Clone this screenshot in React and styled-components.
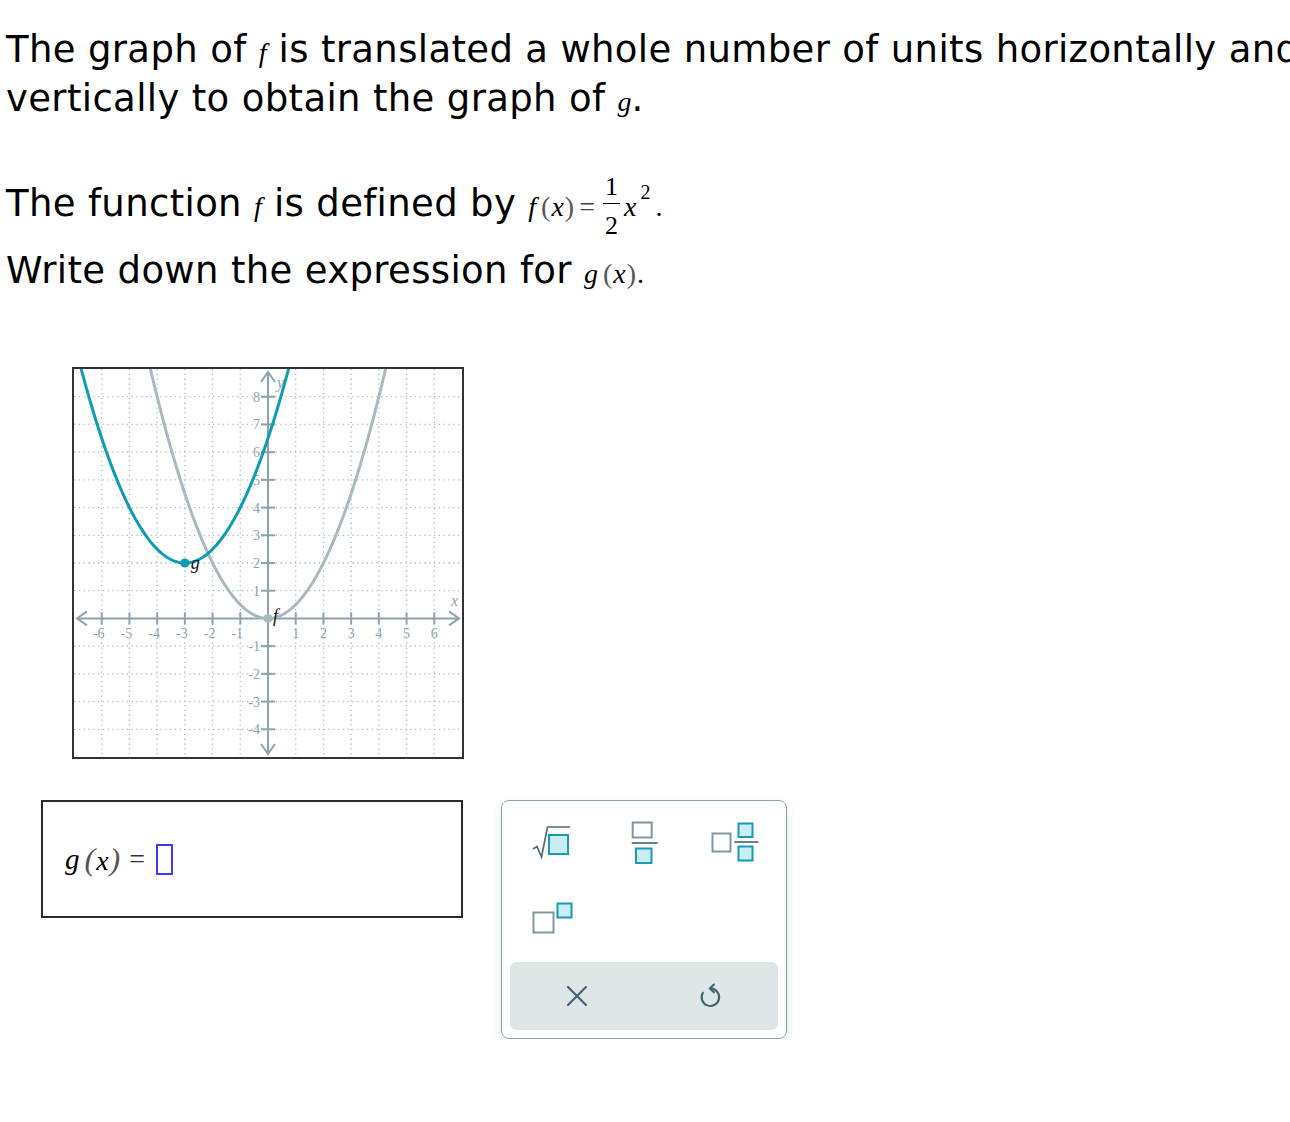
import React from "react";
import styled, { createGlobalStyle } from "styled-components";

const GlobalStyle = createGlobalStyle`
  html, body {
    margin: 0;
    background: #fff;
    overflow: hidden;
  }
  body {
    font-family: "DejaVu Sans", Verdana, sans-serif;
    color: #000;
  }
`;

const Page = styled.div`
  width: 100%;
  overflow: hidden;
  padding-left: 6px;
  box-sizing: border-box;
`;

const Para = styled.div`
  font-size: 37px;
  letter-spacing: 0.35px;
  line-height: 49px;
  white-space: nowrap;
  margin-top: ${(p) => p.$top || 0}px;
`;

const M = styled.span`
  font-family: "Liberation Serif", "Times New Roman", serif;
  font-size: ${(p) => p.$size || 28}px;
  line-height: 1;
  letter-spacing: 0;
  font-style: ${(p) => (p.$upright ? "normal" : "italic")};
  color: ${(p) => p.$color || "#000"};
  margin-left: ${(p) => p.$gap || 0}px;
`;

const Paren = styled.span`
  font-family: "Liberation Serif", "Times New Roman", serif;
  font-style: normal;
  color: #555;
  margin: 0 1px;
`;

const Frac = styled.span`
  display: inline-flex;
  flex-direction: column;
  align-items: center;
  vertical-align: 21px;
  font-family: "Liberation Serif", "Times New Roman", serif;
  font-size: 26px;
  line-height: 22px;
  letter-spacing: 0;
  margin: 0 4px 0 8px;
`;

const FracTop = styled.span`
  font-family: "Liberation Serif", "Times New Roman", serif;
  padding: 0 2px 5px;
  border-bottom: 1px solid #000;
`;

const FracBottom = styled.span`
  font-family: "Liberation Serif", "Times New Roman", serif;
  padding-top: 11px;
`;

const Sup = styled.sup`
  font-family: "Liberation Serif", "Times New Roman", serif;
  font-size: 20px;
  font-style: normal;
  vertical-align: 17px;
  line-height: 0;
  margin-left: 4px;
`;

const GraphFrame = styled.div`
  margin: 72px 0 0 66px;
  width: 388px;
  height: 388px;
  border: 2px solid #333;
  svg {
    display: block;
    overflow: hidden;
  }
`;

const BottomRow = styled.div`
  display: flex;
  align-items: flex-start;
  margin: 41px 0 0 35px;
  gap: 38px;
`;

const AnswerBox = styled.div`
  width: 396px;
  height: 114px;
  padding-left: 22px;
  border: 2px solid #2a2a2a;
  display: flex;
  align-items: center;
`;

const AnswerMath = styled.div`
  font-family: "Liberation Serif", "Times New Roman", serif;
  font-size: 28px;
  display: flex;
  align-items: center;
`;

const BigParen = styled.span`
  font-size: 32px;
  color: #555;
  margin: 0 1px;
`;

const Equals = styled.span`
  margin: 0 11px 0 8px;
  color: #333;
`;

const Slot = styled.span`
  display: inline-block;
  width: 13px;
  height: 27px;
  border: 2px solid #3b3bff;
`;

const Keypad = styled.div`
  width: 268px;
  border: 1.5px solid #8ea6ad;
  border-radius: 8px;
  padding: 0 8px 8px;
  box-shadow: 0 5px 10px rgba(60, 80, 90, 0.14);
  background: #fff;
`;

const KeyGrid = styled.div`
  display: grid;
  grid-template-columns: repeat(3, 1fr);
  grid-auto-rows: 78px;
`;

const Key = styled.div`
  display: flex;
  svg {
    display: block;
  }
`;

const ActionBar = styled.div`
  margin-top: 5px;
  height: 68px;
  background: #dfe6e8;
  border-radius: 6px;
  display: grid;
  grid-template-columns: 1fr 1fr;
`;

const ActionButton = styled.div`
  display: flex;
  align-items: center;
  justify-content: center;
  color: #3e6570;
`;

// graph geometry: x in [-7, 7], y in [-5, 9]
const SIZE = 388;
const U = SIZE / 14;
const px = (x) => (x + 7) * U;
const py = (y) => (9 - y) * U;

const GRID = "#a7bfc6";
const AXIS = "#8ba4ab";
const F_COL = "#a8babf";
const G_COL = "#0f9bb1";

const curvePath = (fn) => {
  let d = "";
  for (let i = 0; i <= 280; i++) {
    const x = -7 + i * 0.05;
    d += (i ? "L" : "M") + px(x).toFixed(2) + " " + py(fn(x)).toFixed(2);
  }
  return d;
};

const xs = [-6, -5, -4, -3, -2, -1, 1, 2, 3, 4, 5, 6];
const ys = [-4, -3, -2, -1, 1, 2, 3, 4, 5, 6, 7, 8];

const Graph = () => {
  const ox = px(0);
  const oy = py(0);
  return (
    <svg width={SIZE} height={SIZE} viewBox={`0 0 ${SIZE} ${SIZE}`}>
      {xs.map((x) => (
        <line key={"gx" + x} x1={px(x)} y1={0} x2={px(x)} y2={SIZE} stroke={GRID} strokeWidth="1.3" strokeDasharray="1.3 3.5" />
      ))}
      {ys.map((y) => (
        <line key={"gy" + y} x1={0} y1={py(y)} x2={SIZE} y2={py(y)} stroke={GRID} strokeWidth="1.3" strokeDasharray="1.3 3.5" />
      ))}
      <g stroke={AXIS} strokeWidth="2" fill="none">
        <line x1={3} y1={oy} x2={SIZE - 3} y2={oy} />
        <line x1={ox} y1={3} x2={ox} y2={SIZE - 3} />
        <polyline points={`${13},${oy - 7} ${3},${oy} ${13},${oy + 7}`} />
        <polyline points={`${SIZE - 13},${oy - 7} ${SIZE - 3},${oy} ${SIZE - 13},${oy + 7}`} />
        <polyline points={`${ox - 7},${13} ${ox},${3} ${ox + 7},${13}`} />
        <polyline points={`${ox - 7},${SIZE - 13} ${ox},${SIZE - 3} ${ox + 7},${SIZE - 13}`} />
        {xs.map((x) => (
          <line key={"tx" + x} x1={px(x)} y1={oy - 6} x2={px(x)} y2={oy + 6} />
        ))}
        {ys.map((y) => (
          <line key={"ty" + y} x1={ox - 7} y1={py(y)} x2={ox + 7} y2={py(y)} />
        ))}
      </g>
      <g fill={AXIS} fontFamily="'Liberation Serif', 'Times New Roman', serif" fontSize="14">
        {xs.map((x) => (
          <text key={"lx" + x} x={px(x) - (x < 0 ? 3 : 0)} y={oy + 20} textAnchor="middle">
            {x < 0 ? "-" + -x : x}
          </text>
        ))}
        {ys.map((y) => (
          <text key={"ly" + y} x={ox - 8} y={py(y) + 5} textAnchor="end">
            {y < 0 ? "-" + -y : y}
          </text>
        ))}
        <text x={px(6.6)} y={oy - 12} fontStyle="italic" fontSize="16">x</text>
        <text x={ox + 9} y={19} fontStyle="italic" fontSize="16">y</text>
      </g>
      <path d={curvePath((x) => 0.5 * x * x)} fill="none" stroke={F_COL} strokeWidth="3" />
      <path d={curvePath((x) => 0.5 * (x + 3) * (x + 3) + 2)} fill="none" stroke={G_COL} strokeWidth="3" />
      <circle cx={ox} cy={oy} r="4.5" fill={F_COL} />
      <circle cx={px(-3)} cy={py(2)} r="4.5" fill={G_COL} />
      <g fontFamily="'Liberation Serif', 'Times New Roman', serif" fontStyle="italic" fontSize="18" fill="#111">
        <text x={ox + 5} y={oy + 4}>f</text>
        <text x={px(-3) + 6} y={py(2) + 6}>g</text>
      </g>
    </svg>
  );
};

const TEAL = "#169cb4";
const TEAL_FILL = "#c9edf2";
const GREY = "#7e98a0";
const INK = "#4d6a73";

const SqrtKey = () => (
  <svg width="89" height="78" viewBox="0 0 89 78">
    <path d="M23 48 L27 45.5 L31.5 56 L37.5 26 L60 26" fill="none" stroke={INK} strokeWidth="1.7" />
    <rect x="39" y="34" width="19" height="19" fill={TEAL_FILL} stroke={TEAL} strokeWidth="2" />
  </svg>
);

const FracKey = () => (
  <svg width="89" height="78" viewBox="0 0 89 78">
    <rect x="33.7" y="21.5" width="19" height="15" fill="#fff" stroke={GREY} strokeWidth="2" />
    <line x1="32.7" y1="42" x2="58.7" y2="42" stroke={INK} strokeWidth="1.7" />
    <rect x="37" y="47.5" width="15.5" height="14.5" fill={TEAL_FILL} stroke={TEAL} strokeWidth="2" />
  </svg>
);

const MixedKey = () => (
  <svg width="89" height="78" viewBox="0 0 89 78">
    <rect x="23.5" y="32.5" width="18" height="18" fill="#fff" stroke={GREY} strokeWidth="2" />
    <rect x="49.5" y="22.5" width="14" height="13.5" fill={TEAL_FILL} stroke={TEAL} strokeWidth="2" />
    <line x1="45.3" y1="41" x2="69.3" y2="41" stroke={INK} strokeWidth="1.7" />
    <rect x="49.5" y="45.5" width="14" height="14" fill={TEAL_FILL} stroke={TEAL} strokeWidth="2" />
  </svg>
);

const PowerKey = () => (
  <svg width="89" height="78" viewBox="0 0 89 78">
    <rect x="23.5" y="33.5" width="20" height="20" fill="#fff" stroke={GREY} strokeWidth="2" />
    <rect x="47.5" y="24.5" width="14" height="14" fill={TEAL_FILL} stroke={TEAL} strokeWidth="2" />
  </svg>
);

const ClearIcon = () => (
  <svg width="22" height="22" viewBox="0 0 22 22">
    <path d="M2 2 L20 20 M20 2 L2 20" stroke="currentColor" strokeWidth="2.2" strokeLinecap="round" />
  </svg>
);

const UndoIcon = () => (
  <svg width="28" height="28" viewBox="0 0 24 24" fill="none" stroke="currentColor" strokeWidth="1.8" strokeLinecap="round" strokeLinejoin="round">
    <path d="M11.5 5.5 A7.5 7.5 0 1 1 5 9.2" />
    <path d="M14.5 2.2 L11 5.5 L14.5 8.8" />
  </svg>
);

export default function App() {
  return (
    <>
      <GlobalStyle />
      <Page>
        <Para $top={25}>
          The graph of <M>f</M> is translated a whole number of units horizontally and
          <br />
          vertically to obtain the graph of <M>g</M>.
        </Para>
        <Para $top={53}>
          The function <M>f</M> is defined by <M>f</M>
          <M $gap={4}>
            <Paren>(</Paren>x<Paren>)</Paren>
          </M>
          <M $upright $color="#444" $gap={4}>=</M>
          <Frac>
            <FracTop>1</FracTop>
            <FracBottom>2</FracBottom>
          </Frac>
          <M>
            x<Sup>2</Sup>
          </M>
          <M $upright $gap={5}>.</M>
        </Para>
        <Para $top={9}>
          Write down the expression for <M>g</M>
          <M $gap={4}>
            <Paren>(</Paren>x<Paren>)</Paren>
          </M>
          <M $upright>.</M>
        </Para>
        <GraphFrame>
          <Graph />
        </GraphFrame>
        <BottomRow>
          <AnswerBox>
            <AnswerMath>
              <M $size={29}>g</M>
              <M $size={28} $gap={4}>
                <BigParen>(</BigParen>x<BigParen>)</BigParen>
              </M>
              <Equals>=</Equals>
              <Slot />
            </AnswerMath>
          </AnswerBox>
          <Keypad>
            <KeyGrid>
              <Key>
                <SqrtKey />
              </Key>
              <Key>
                <FracKey />
              </Key>
              <Key>
                <MixedKey />
              </Key>
              <Key>
                <PowerKey />
              </Key>
            </KeyGrid>
            <ActionBar>
              <ActionButton>
                <ClearIcon />
              </ActionButton>
              <ActionButton>
                <UndoIcon />
              </ActionButton>
            </ActionBar>
          </Keypad>
        </BottomRow>
      </Page>
    </>
  );
}
